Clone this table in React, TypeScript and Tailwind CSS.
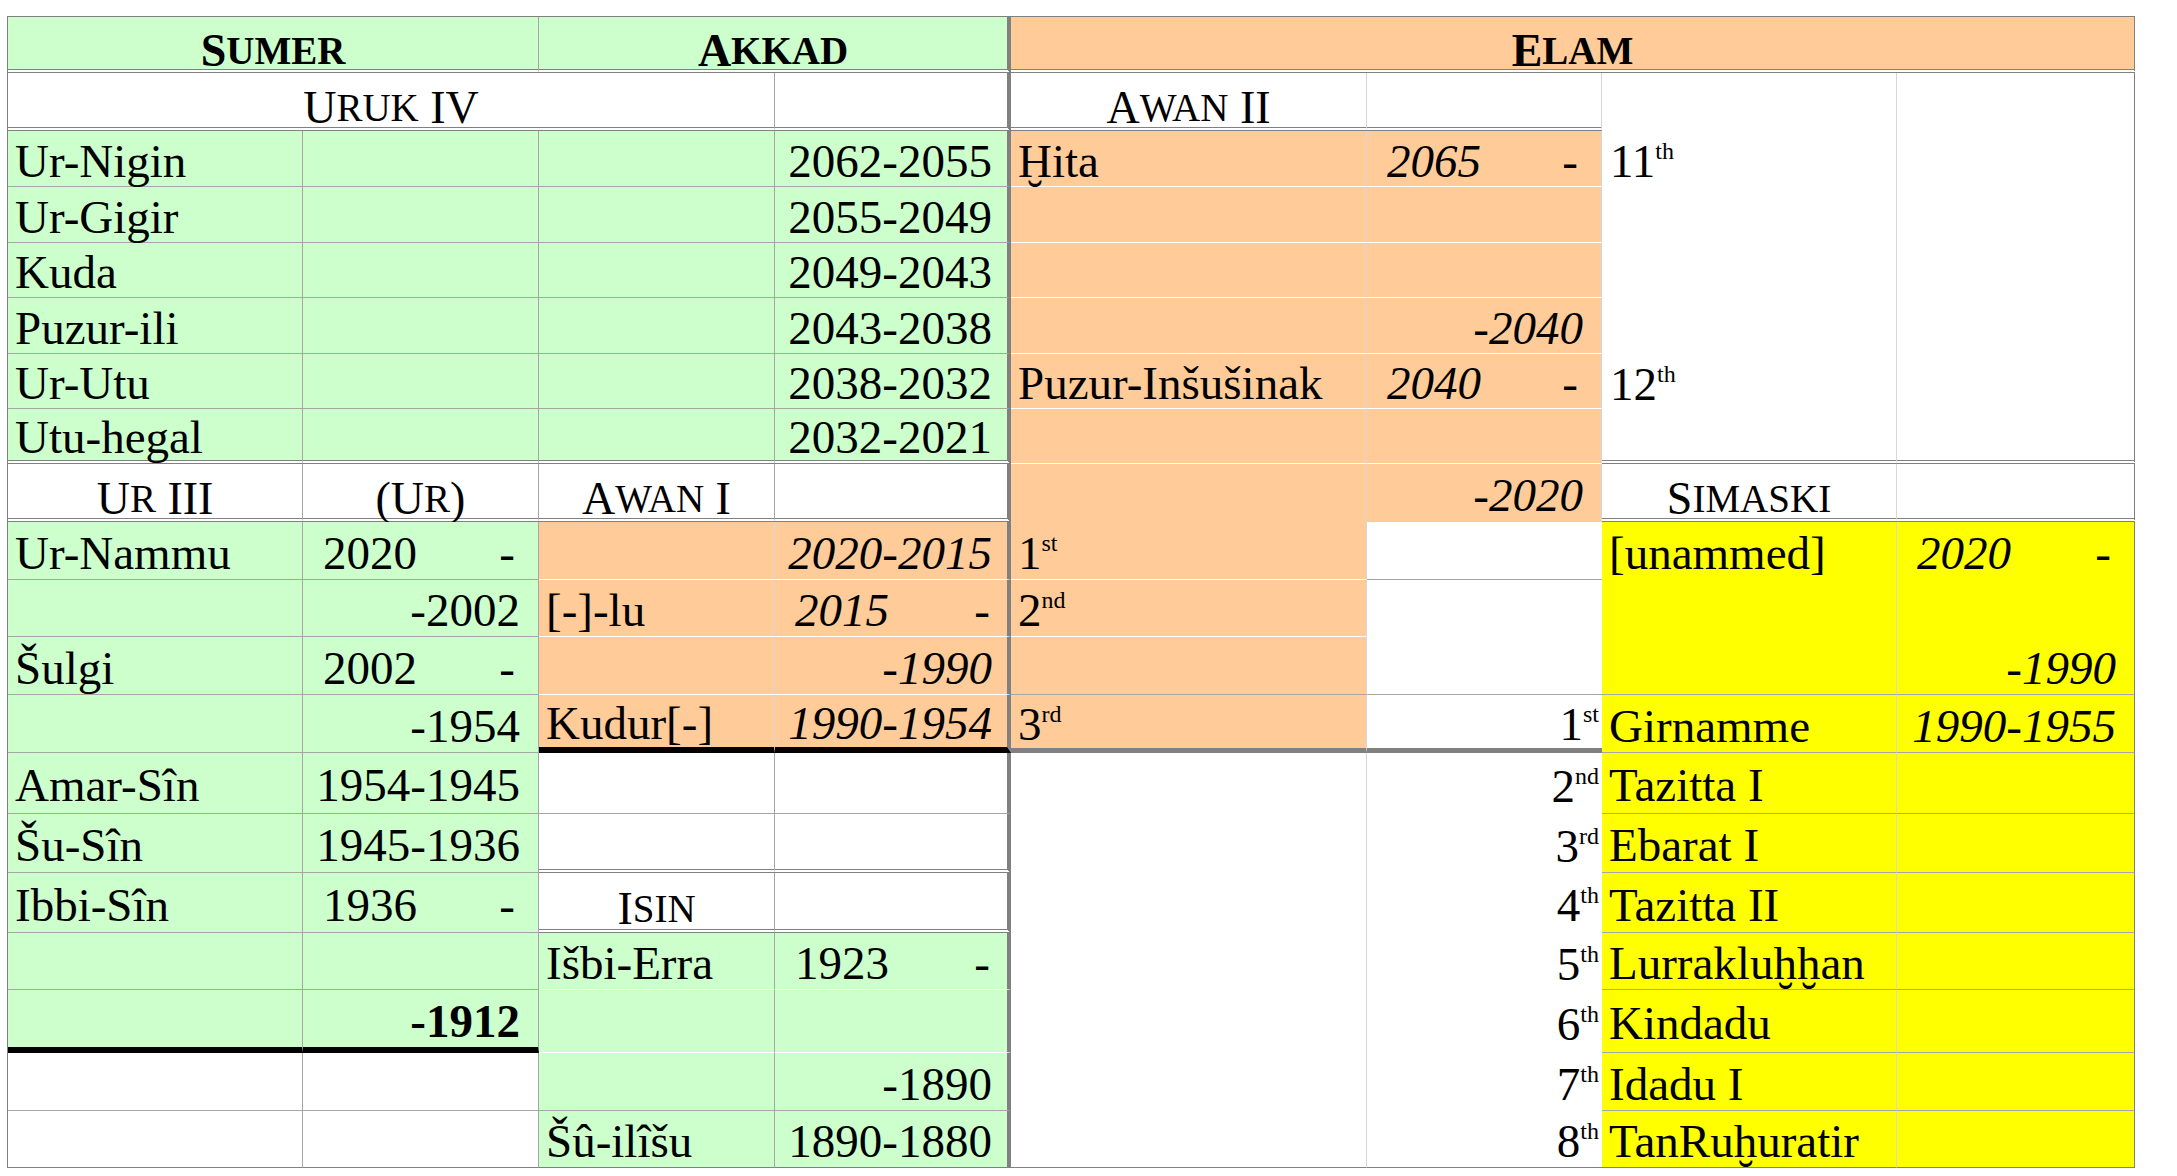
import React from "react";

// cell colours
const G = "bg-[#ccffcc]";
const O = "bg-[#ffcc99]";
const Y = "bg-[#ffff00]";
const W = "bg-white";

// right borders
const rg = "border-r border-r-[#a6a6a6]";
const rl = "border-r border-r-[#d6d6d6]";
const rk = "border-r-4 border-r-[#808080]";
const re = "border-r border-r-[#808080]";
const r0 = "";

// bottom borders
const bgr = "border-b border-b-[#a6a6a6]";
const bw = "border-b border-b-white";
const bd = "border-b-4 [border-bottom-style:double] border-b-[#808080] bg-clip-padding";
const bk = "border-b-[6px] border-b-black";
const bh = "border-b-[5px] border-b-[#808080]";
const be = "border-b border-b-[#808080]";
const b0 = "";

// alignment
const L = "justify-start pl-[7px]";
const R = "justify-end pr-[18px]";
const R4 = "justify-end pr-[15px]";
const J = "justify-between pl-[20px] pr-[23px]";
const J4 = "justify-between pl-[20px] pr-[17px]";
const M = "justify-center";
const RS = "justify-end pr-[3px]";

const sm = "text-[39px]";

const cx = (...parts: string[]) => parts.filter(Boolean).join(" ");

function Cell({ c, h, children }: { c: string; h?: boolean; children?: React.ReactNode }) {
  return (
    <div className={`flex items-center whitespace-nowrap ${h ? "pt-[15px] text-[46px]" : "pt-[4px]"} ${c}`}>
      {children}
    </div>
  );
}

function Ord({ n, s }: { n: string; s: string }) {
  return (
    <span>
      {n}
      <sup className="text-[24px] -top-[18px]">{s}</sup>
    </span>
  );
}

function Pair({ a, b }: { a: string; b: string }) {
  return (
    <>
      <span>{a}</span>
      <span>{b}</span>
    </>
  );
}

export default function App() {
  return (
    <div className="min-h-screen bg-white pt-[16px] pl-[7px] font-['Liberation_Serif',serif] text-[47px] leading-[54px] text-black">
      <div className="grid w-max grid-cols-[295px_236px_236px_236px_356px_235px_295px_238px] grid-rows-[56px_58px_56px_56px_55px_56px_55px_55px_58px_58px_57px_58px_58px_61px_59px_60px_57px_63px_58px_57px] border-t border-l border-[#808080]">
        {/* Row 0: regions */}
        <Cell h c={cx("col-span-2 font-bold", G, rg, bd, M)}>
          S<span className={sm}>UMER</span>
        </Cell>
        <Cell h c={cx("col-span-2 font-bold", G, rk, bd, M)}>
          A<span className={sm}>KKAD</span>
        </Cell>
        <Cell h c={cx("col-span-4 font-bold", O, re, bd, M)}>
          E<span className={sm}>LAM</span>
        </Cell>

        {/* Row 1 */}
        <Cell h c={cx("col-span-3", W, rg, bd, M)}>
          U<span className={sm}>RUK</span>&nbsp;IV
        </Cell>
        <Cell c={cx(W, rk, bd)} />
        <Cell h c={cx(W, rl, bd, M)}>
          A<span className={sm}>WAN</span>&nbsp;II
        </Cell>
        <Cell c={cx(W, rl, bd)} />
        <Cell c={cx(W, rl, b0)} />
        <Cell c={cx(W, re, b0)} />

        {/* Row 2 */}
        <Cell c={cx(G, rg, bgr, L)}>Ur-Nigin</Cell>
        <Cell c={cx(G, rg, bgr)} />
        <Cell c={cx(G, rg, bgr)} />
        <Cell c={cx(G, rk, bgr, R4)}>2062-2055</Cell>
        <Cell c={cx(O, rl, bw, L)}>Ḫita</Cell>
        <Cell c={cx("italic", O, rl, bw, J)}>
          <Pair a="2065" b="-" />
        </Cell>
        <Cell c={cx("justify-start pl-[8px]", W, rl, b0)}>
          <Ord n="11" s="th" />
        </Cell>
        <Cell c={cx(W, re, b0)} />

        {/* Row 3 */}
        <Cell c={cx(G, rg, bgr, L)}>Ur-Gigir</Cell>
        <Cell c={cx(G, rg, bgr)} />
        <Cell c={cx(G, rg, bgr)} />
        <Cell c={cx(G, rk, bgr, R4)}>2055-2049</Cell>
        <Cell c={cx(O, rl, bw)} />
        <Cell c={cx(O, rl, bw)} />
        <Cell c={cx(W, rl, b0)} />
        <Cell c={cx(W, re, b0)} />

        {/* Row 4 */}
        <Cell c={cx(G, rg, bgr, L)}>Kuda</Cell>
        <Cell c={cx(G, rg, bgr)} />
        <Cell c={cx(G, rg, bgr)} />
        <Cell c={cx(G, rk, bgr, R4)}>2049-2043</Cell>
        <Cell c={cx(O, rl, bw)} />
        <Cell c={cx(O, rl, bw)} />
        <Cell c={cx(W, rl, b0)} />
        <Cell c={cx(W, re, b0)} />

        {/* Row 5 */}
        <Cell c={cx(G, rg, bgr, L)}>Puzur-ili</Cell>
        <Cell c={cx(G, rg, bgr)} />
        <Cell c={cx(G, rg, bgr)} />
        <Cell c={cx(G, rk, bgr, R4)}>2043-2038</Cell>
        <Cell c={cx(O, rl, bw)} />
        <Cell c={cx("italic", O, rl, bw, R)}>-2040</Cell>
        <Cell c={cx(W, rl, b0)} />
        <Cell c={cx(W, re, b0)} />

        {/* Row 6 */}
        <Cell c={cx(G, rg, bgr, L)}>Ur-Utu</Cell>
        <Cell c={cx(G, rg, bgr)} />
        <Cell c={cx(G, rg, bgr)} />
        <Cell c={cx(G, rk, bgr, R4)}>2038-2032</Cell>
        <Cell c={cx(O, rl, bw, L)}>Puzur-Inšušinak</Cell>
        <Cell c={cx("italic", O, rl, bw, J)}>
          <Pair a="2040" b="-" />
        </Cell>
        <Cell c={cx("justify-start pl-[8px]", W, rl, b0)}>
          <Ord n="12" s="th" />
        </Cell>
        <Cell c={cx(W, re, b0)} />

        {/* Row 7 */}
        <Cell c={cx(G, rg, bd, L)}>Utu-hegal</Cell>
        <Cell c={cx(G, rg, bd)} />
        <Cell c={cx(G, rg, bd)} />
        <Cell c={cx(G, rk, bd, R4)}>2032-2021</Cell>
        <Cell c={cx(O, rl, bw)} />
        <Cell c={cx(O, rl, bw)} />
        <Cell c={cx(W, rl, bd)} />
        <Cell c={cx(W, re, bd)} />

        {/* Row 8: dynasties */}
        <Cell h c={cx(W, rg, bd, M)}>
          U<span className={sm}>R</span>&nbsp;III
        </Cell>
        <Cell h c={cx(W, rg, bd, M)}>
          (U<span className={sm}>R</span>)
        </Cell>
        <Cell h c={cx(W, rg, bd, M)}>
          A<span className={sm}>WAN</span>&nbsp;I
        </Cell>
        <Cell c={cx(W, rk, bd)} />
        <Cell c={cx(O, rl, b0)} />
        <Cell c={cx("italic", O, rl, b0, R)}>-2020</Cell>
        <Cell h c={cx(W, rl, bd, M)}>
          S<span className={sm}>IMASKI</span>
        </Cell>
        <Cell c={cx(W, re, bd)} />

        {/* Row 9 */}
        <Cell c={cx(G, rg, bgr, L)}>Ur-Nammu</Cell>
        <Cell c={cx(G, rg, bgr, J)}>
          <Pair a="2020" b="-" />
        </Cell>
        <Cell c={cx(O, rl, bw)} />
        <Cell c={cx("italic", O, rk, bw, R4)}>2020-2015</Cell>
        <Cell c={cx(O, rl, bw, L)}>
          <Ord n="1" s="st" />
        </Cell>
        <Cell c={cx(W, r0, bgr)} />
        <Cell c={cx(Y, rl, b0, L)}>[unammed]</Cell>
        <Cell c={cx("italic", Y, re, b0, J)}>
          <Pair a="2020" b="-" />
        </Cell>

        {/* Row 10 */}
        <Cell c={cx(G, rg, bgr)} />
        <Cell c={cx(G, rg, bgr, R)}>-2002</Cell>
        <Cell c={cx(O, rl, bw, L)}>[-]-lu</Cell>
        <Cell c={cx("italic", O, rk, bw, J4)}>
          <Pair a="2015" b="-" />
        </Cell>
        <Cell c={cx(O, rl, bw, L)}>
          <Ord n="2" s="nd" />
        </Cell>
        <Cell c={cx(W, r0, b0)} />
        <Cell c={cx(Y, rl, b0)} />
        <Cell c={cx(Y, re, b0)} />

        {/* Row 11 */}
        <Cell c={cx(G, rg, bgr, L)}>Šulgi</Cell>
        <Cell c={cx(G, rg, bgr, J)}>
          <Pair a="2002" b="-" />
        </Cell>
        <Cell c={cx(O, rl, bw)} />
        <Cell c={cx("italic", O, rk, bw, R4)}>-1990</Cell>
        <Cell c={cx(O, rl, bgr)} />
        <Cell c={cx(W, r0, bgr)} />
        <Cell c={cx(Y, rl, bgr)} />
        <Cell c={cx("italic", Y, re, bgr, R)}>-1990</Cell>

        {/* Row 12 */}
        <Cell c={cx(G, rg, bgr)} />
        <Cell c={cx(G, rg, bgr, R)}>-1954</Cell>
        <Cell c={cx(O, rl, bk, L)}>Kudur[-]</Cell>
        <Cell c={cx("italic", O, rk, bk, R4)}>1990-1954</Cell>
        <Cell c={cx(O, rl, bh, L)}>
          <Ord n="3" s="rd" />
        </Cell>
        <Cell c={cx(W, r0, bh, RS)}>
          <Ord n="1" s="st" />
        </Cell>
        <Cell c={cx(Y, rl, bgr, L)}>Girnamme</Cell>
        <Cell c={cx("italic", Y, re, bgr, R)}>1990-1955</Cell>

        {/* Row 13 */}
        <Cell c={cx(G, rg, bgr, L)}>Amar-Sîn</Cell>
        <Cell c={cx(G, rg, bgr, R)}>1954-1945</Cell>
        <Cell c={cx(W, rg, bgr)} />
        <Cell c={cx(W, rk, bgr)} />
        <Cell c={cx(W, rl, b0)} />
        <Cell c={cx(W, r0, b0, RS)}>
          <Ord n="2" s="nd" />
        </Cell>
        <Cell c={cx(Y, rl, bgr, L)}>Tazitta I</Cell>
        <Cell c={cx(Y, re, bgr)} />

        {/* Row 14 */}
        <Cell c={cx(G, rg, bgr, L)}>Šu-Sîn</Cell>
        <Cell c={cx(G, rg, bgr, R)}>1945-1936</Cell>
        <Cell c={cx(W, rg, bd)} />
        <Cell c={cx(W, rk, bd)} />
        <Cell c={cx(W, rl, b0)} />
        <Cell c={cx(W, r0, b0, RS)}>
          <Ord n="3" s="rd" />
        </Cell>
        <Cell c={cx(Y, rl, bgr, L)}>Ebarat I</Cell>
        <Cell c={cx(Y, re, bgr)} />

        {/* Row 15 */}
        <Cell c={cx(G, rg, bgr, L)}>Ibbi-Sîn</Cell>
        <Cell c={cx(G, rg, bgr, J)}>
          <Pair a="1936" b="-" />
        </Cell>
        <Cell h c={cx(W, rg, bd, M)}>
          I<span className={sm}>SIN</span>
        </Cell>
        <Cell c={cx(W, rk, bd)} />
        <Cell c={cx(W, rl, b0)} />
        <Cell c={cx(W, r0, b0, RS)}>
          <Ord n="4" s="th" />
        </Cell>
        <Cell c={cx(Y, rl, bgr, L)}>Tazitta II</Cell>
        <Cell c={cx(Y, re, bgr)} />

        {/* Row 16 */}
        <Cell c={cx(G, rg, bgr)} />
        <Cell c={cx(G, rg, bgr)} />
        <Cell c={cx(G, rg, bw, L)}>Išbi-Erra</Cell>
        <Cell c={cx(G, rk, bw, J4)}>
          <Pair a="1923" b="-" />
        </Cell>
        <Cell c={cx(W, rl, b0)} />
        <Cell c={cx(W, r0, b0, RS)}>
          <Ord n="5" s="th" />
        </Cell>
        <Cell c={cx(Y, rl, bgr, L)}>Lurrakluḫḫan</Cell>
        <Cell c={cx(Y, re, bgr)} />

        {/* Row 17 */}
        <Cell c={cx(G, rg, bk)} />
        <Cell c={cx("font-bold", G, rg, bk, R)}>-1912</Cell>
        <Cell c={cx(G, rg, bw)} />
        <Cell c={cx(G, rk, bw)} />
        <Cell c={cx(W, rl, b0)} />
        <Cell c={cx(W, r0, b0, RS)}>
          <Ord n="6" s="th" />
        </Cell>
        <Cell c={cx(Y, rl, bgr, L)}>Kindadu</Cell>
        <Cell c={cx(Y, re, bgr)} />

        {/* Row 18 */}
        <Cell c={cx(W, rg, bgr)} />
        <Cell c={cx(W, rg, bgr)} />
        <Cell c={cx(G, rg, bgr)} />
        <Cell c={cx(G, rk, bgr, R4)}>-1890</Cell>
        <Cell c={cx(W, rl, b0)} />
        <Cell c={cx(W, r0, b0, RS)}>
          <Ord n="7" s="th" />
        </Cell>
        <Cell c={cx(Y, rl, bgr, L)}>Idadu I</Cell>
        <Cell c={cx(Y, re, bgr)} />

        {/* Row 19 */}
        <Cell c={cx(W, rg, be)} />
        <Cell c={cx(W, rg, be)} />
        <Cell c={cx(G, rg, be, L)}>Šû-ilîšu</Cell>
        <Cell c={cx(G, rk, be, R4)}>1890-1880</Cell>
        <Cell c={cx(W, rl, be)} />
        <Cell c={cx(W, r0, be, RS)}>
          <Ord n="8" s="th" />
        </Cell>
        <Cell c={cx(Y, rl, be, L)}>TanRuḫuratir</Cell>
        <Cell c={cx(Y, re, be)} />
      </div>
    </div>
  );
}
